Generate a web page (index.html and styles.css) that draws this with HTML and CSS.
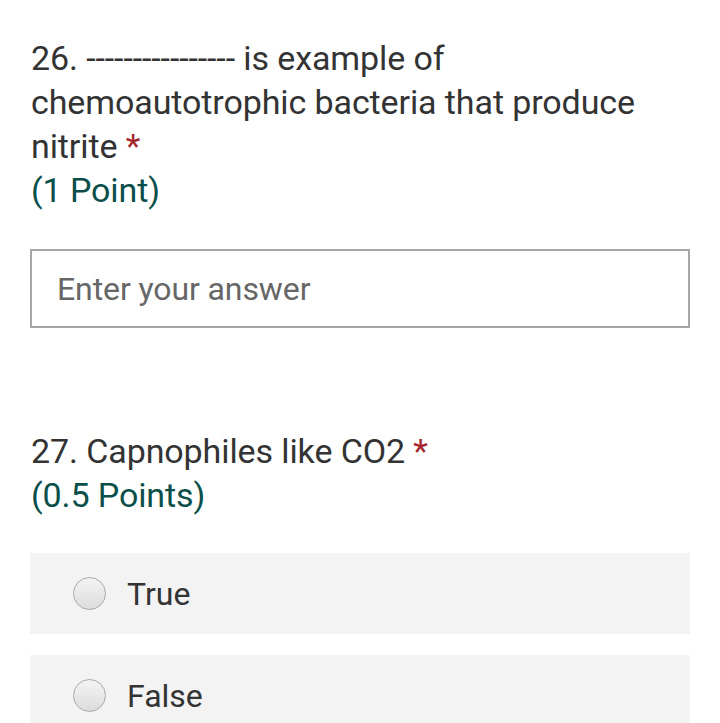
FILE: index.html
```html
<!DOCTYPE html>
<html>
<head>
<meta charset="utf-8">
<link rel="stylesheet" href="styles.css">
</head>
<body>
<div class="form">
  <div class="question q26">
    <div class="title">26. ---------------- is example of chemoautotrophic bacteria that produce nitrite <span class="req">*</span></div>
    <div class="points">(1 Point)</div>
    <div class="input">Enter your answer</div>
  </div>
  <div class="question q27">
    <div class="title">27. Capnophiles like CO2 <span class="req">*</span></div>
    <div class="points">(0.5 Points)</div>
    <div class="options">
      <div class="option"><span class="radio"></span><span class="label">True</span></div>
      <div class="option"><span class="radio"></span><span class="label">False</span></div>
    </div>
  </div>
</div>
</body>
</html>
```
FILE: styles.css
```css
html, body {
  margin: 0;
  padding: 0;
  background: #fff;
}
body {
  font-family: Roboto, "Noto Sans", sans-serif;
  color: #333;
}
.form {
  padding: 36px 30px 0 30px;
  width: 660px;
}
.title {
  font-size: 34px;
  line-height: 44px;
  letter-spacing: -0.1px;
  padding-left: 1px;
}
.req {
  color: #a4262c;
}
.points {
  font-size: 34px;
  line-height: 44px;
  letter-spacing: -0.1px;
  color: #0b4f4a;
  padding-left: 1px;
}
.input {
  margin-top: 37px;
  height: 75px;
  border: 2px solid #a6a6a6;
  box-sizing: content-box;
  display: flex;
  align-items: center;
  padding-left: 25px;
  font-size: 32px;
  letter-spacing: -0.1px;
  color: #666;
}
.q27 {
  margin-top: 101px;
}
.options {
  margin-top: 36px;
  display: flex;
  flex-direction: column;
  gap: 21px;
}
.option {
  background: #f3f3f3;
  height: 81px;
  display: flex;
  align-items: center;
  padding-left: 43px;
}
.radio {
  width: 33px;
  height: 33px;
  border-radius: 50%;
  border: 1px solid #a9a9a9;
  box-sizing: border-box;
  background: linear-gradient(#f4f4f4, #dcdcdc);
  margin-right: 21px;
}
.label {
  font-size: 32px;
  color: #333;
}
```
